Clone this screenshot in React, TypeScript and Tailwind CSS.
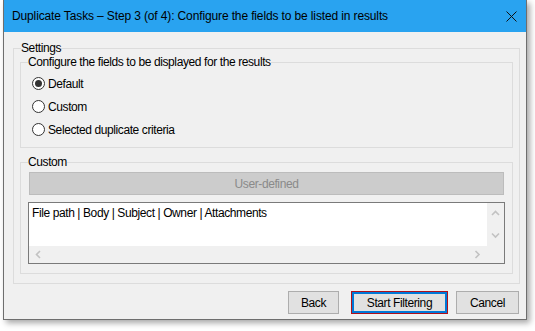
import React from 'react';

const font = { fontFamily: '"Liberation Sans", Arial, sans-serif' };

function Radio({ label, checked }: { label: string; checked?: boolean }) {
  return (
    <div className="flex h-[23px] items-center pl-[11px]">
      <div className="flex h-[13px] w-[13px] items-center justify-center rounded-full border border-[#333333] bg-white">
        {checked && <div className="h-[7px] w-[7px] rounded-full bg-[#333333]" />}
      </div>
      <span className="ml-[3px] text-[12px] leading-[14px] text-black">{label}</span>
    </div>
  );
}

function Chevron({ dir }: { dir: 'up' | 'down' | 'left' | 'right' }) {
  const paths: Record<string, string> = {
    up: 'M1 5 L4.5 1.5 L8 5',
    down: 'M1 1.5 L4.5 5 L8 1.5',
    left: 'M5 1 L1.5 4.5 L5 8',
    right: 'M1.5 1 L5 4.5 L1.5 8',
  };
  const vertical = dir === 'up' || dir === 'down';
  return (
    <svg width={vertical ? 9 : 7} height={vertical ? 7 : 9} viewBox={vertical ? '0 0 9 7' : '0 0 7 9'}>
      <path d={paths[dir]} fill="none" stroke="#c2c2c2" strokeWidth="1.6" />
    </svg>
  );
}

function Button({ label, width, focused }: { label: string; width: string; focused?: boolean }) {
  return (
    <button
      className={`flex h-[23px] ${width} items-center justify-center bg-[#e1e1e1] text-[12px] leading-[14px] text-black ${
        focused
          ? 'border border-[#b0101a] shadow-[inset_0_0_0_2px_#0078d7]'
          : 'border border-[#adadad]'
      }`}
    >
      {label}
    </button>
  );
}

export default function App() {
  return (
    <div className="h-[331px] w-[535px] bg-white pl-[3px] tracking-[-0.4px]" style={font}>
      <div className="flex h-[320px] w-[524px] flex-col border-x border-b border-[#6e6e6e] bg-[#f0f0f0] shadow-[3px_3px_6px_rgba(0,0,0,0.35)]">
        {/* Title bar */}
        <div className="flex h-[32px] items-center justify-between bg-[#29a3f0] pl-[8px] pr-[8px]">
          <span className="text-[12px] leading-[14px] tracking-[-0.13px] text-black">
            Duplicate Tasks – Step 3 (of 4): Configure the fields to be listed in results
          </span>
          <svg width="11" height="11" viewBox="0 0 11 11" className="mr-[1px]">
            <path d="M0.5 0.5 L10.5 10.5 M10.5 0.5 L0.5 10.5" stroke="#111" strokeWidth="1" />
          </svg>
        </div>

        {/* Settings */}
        <fieldset className="ml-[9px] mt-[9px] w-[507px] border border-[#dcdcdc] pb-[9px]">
          <legend className="ml-[7px] text-[12px] leading-[14px] text-black">Settings</legend>

          <fieldset className="mx-[6px] border border-[#dcdcdc] pb-[6px]">
            <legend className="ml-[7px] text-[12px] leading-[14px] text-black">
              Configure the fields to be displayed for the results
            </legend>
            <div className="mt-[3px] flex flex-col">
              <Radio label="Default" checked />
              <Radio label="Custom" />
              <Radio label="Selected duplicate criteria" />
            </div>
          </fieldset>

          <fieldset className="mx-[6px] mt-[7px] border border-[#dcdcdc] px-[7px] pb-[9px]">
            <legend className="text-[12px] leading-[14px] text-black">Custom</legend>
            <div className="mx-[1px] mt-[3px] flex h-[23px] items-center justify-center border border-[#bcbcbc] bg-[#cccccc] text-[12px] text-[#8a8a8a]">
              User-defined
            </div>
            <div className="mt-[7px] grid h-[62px] grid-cols-[1fr_17px] grid-rows-[1fr_17px] border border-[#7a7a7a] bg-[#f0f0f0]">
              <div className="bg-white px-[3px] pt-[3px] text-[12px] leading-[14px] text-black">
                File path | Body | Subject | Owner | Attachments
              </div>
              <div className="flex flex-col items-center justify-between py-[7px]">
                <Chevron dir="up" />
                <Chevron dir="down" />
              </div>
              <div className="flex items-center justify-between px-[6px]">
                <Chevron dir="left" />
                <Chevron dir="right" />
              </div>
              <div />
            </div>
          </fieldset>
        </fieldset>

        {/* Actions */}
        <div className="mr-[7px] mt-[7px] flex justify-end">
          <Button label="Back" width="w-[51px]" />
          <div className="w-[12px]" />
          <Button label="Start Filtering" width="w-[97px]" focused />
          <div className="w-[8px]" />
          <Button label="Cancel" width="w-[63px]" />
        </div>
      </div>
    </div>
  );
}
